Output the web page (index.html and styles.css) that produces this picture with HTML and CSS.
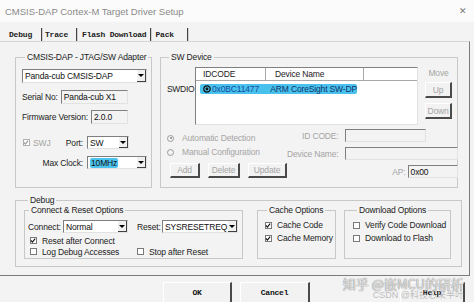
FILE: index.html
```html
<!DOCTYPE html>
<html lang="en">
<head>
    <meta charset="UTF-8">
    <title>CMSIS-DAP Cortex-M Target Driver Setup</title>
    <link rel="stylesheet" href="styles.css">
</head>
<body>
    <div class="window">
        <div class="titlebar">
            <span class="title">CMSIS-DAP Cortex-M Target Driver Setup</span>
            <span class="close">&#x2715;</span>
        </div>

        <div class="tabs">
            <span class="tab">Debug</span>
            <span class="tab">Trace</span>
            <span class="tab">Flash Download</span>
            <span class="tab">Pack</span>
        </div>

        <div class="panel">
            <div class="top-row">
                <fieldset class="group adapter">
                    <legend>CMSIS-DAP - JTAG/SW Adapter</legend>
                    <div class="select adapter-select">
                        <span class="val">Panda-cub CMSIS-DAP</span><span class="arrow"></span>
                    </div>
                    <div class="field-row serial-row">
                        <span>Serial No:</span>
                        <div class="input ro serial-input">Panda-cub X1</div>
                    </div>
                    <div class="field-row fw-row">
                        <span>Firmware Version:</span>
                        <div class="input ro fw-input">2.0.0</div>
                    </div>
                    <div class="port-grid">
                        <div class="swj">
                            <span class="check off-state">
                                <svg width="7" height="7" viewBox="0 0 7 7"><path d="M1 3.4 L2.8 5.3 L6 1.3" fill="none" stroke="#9a9a9a" stroke-width="1.3"/></svg>
                            </span>
                            <span class="dim swj-text">SWJ</span>
                            <span class="port-lbl">Port:</span>
                        </div>
                        <div class="select sw-select"><span class="val">SW</span><span class="arrow"></span></div>
                        <div class="clock-lbl">Max Clock:</div>
                        <div class="select clock-select"><span class="val"><span class="hl">10MHz</span></span><span class="arrow"></span></div>
                    </div>
                </fieldset>

                <fieldset class="group swdev">
                    <legend>SW Device</legend>
                    <div class="dev-top">
                        <div class="swdio">SWDIO</div>
                        <div class="list">
                            <div class="list-head">
                                <span class="col-id">IDCODE</span>
                                <span class="col-name">Device Name</span>
                                <span class="col-rest"></span>
                            </div>
                            <div class="list-row">
                                <span class="hl-row">
                                    <svg class="dot-icon" width="8" height="8" viewBox="0 0 8 8"><circle cx="4" cy="4" r="3.2" fill="none" stroke="#111" stroke-width="1.2"/><circle cx="4" cy="4" r="1.4" fill="#111"/></svg>
                                    <span class="id-text">0x0BC11477</span>
                                    <span class="name-text">ARM CoreSight SW-DP</span>
                                </span>
                            </div>
                        </div>
                        <div class="move">
                            <div class="dim move-lbl">Move</div>
                            <div class="btn dim up-btn">Up</div>
                            <div class="btn dim down-btn">Down</div>
                        </div>
                    </div>
                    <div class="dev-bottom">
                        <div class="dev-left">
                            <div class="radio-row dim"><span class="radio on"></span>Automatic Detection</div>
                            <div class="radio-row dim second"><span class="radio"></span>Manual Configuration</div>
                            <div class="dev-buttons">
                                <div class="btn dim add-btn">Add</div>
                                <div class="btn dim del-btn">Delete</div>
                                <div class="btn dim upd-btn">Update</div>
                            </div>
                        </div>
                        <div class="dev-right">
                            <div class="dev-field id-row"><span class="dim">ID CODE:</span><div class="input ro id-input"></div></div>
                            <div class="dev-field name-row"><span class="dim">Device Name:</span><div class="input ro name-input"></div></div>
                            <div class="dev-field ap-row"><span class="dim">AP:</span><div class="input ro ap-input">0x00</div></div>
                        </div>
                    </div>
                </fieldset>
            </div>

            <fieldset class="group debug">
                <legend>Debug</legend>
                <div class="debug-row">
                    <fieldset class="group conn">
                        <legend>Connect &amp; Reset Options</legend>
                        <div class="conn-row">
                            <span class="conn-lbl">Connect:</span>
                            <div class="select normal-select"><span class="val">Normal</span><span class="arrow"></span></div>
                            <span class="reset-lbl">Reset:</span>
                            <div class="select reset-select"><span class="val">SYSRESETREQ</span><span class="arrow"></span></div>
                        </div>
                        <div class="check-row first">
                            <span class="check"><svg width="7" height="7" viewBox="0 0 7 7"><path d="M1 3.4 L2.8 5.3 L6 1.3" fill="none" stroke="#111" stroke-width="1.3"/></svg></span>
                            Reset after Connect
                        </div>
                        <div class="check-row">
                            <span class="check-item log-item"><span class="check"></span>Log Debug Accesses</span>
                            <span class="check-item"><span class="check"></span>Stop after Reset</span>
                        </div>
                    </fieldset>

                    <fieldset class="group cache">
                        <legend>Cache Options</legend>
                        <div class="check-row first">
                            <span class="check"><svg width="7" height="7" viewBox="0 0 7 7"><path d="M1 3.4 L2.8 5.3 L6 1.3" fill="none" stroke="#111" stroke-width="1.3"/></svg></span>
                            Cache Code
                        </div>
                        <div class="check-row">
                            <span class="check"><svg width="7" height="7" viewBox="0 0 7 7"><path d="M1 3.4 L2.8 5.3 L6 1.3" fill="none" stroke="#111" stroke-width="1.3"/></svg></span>
                            Cache Memory
                        </div>
                    </fieldset>

                    <fieldset class="group dl">
                        <legend>Download Options</legend>
                        <div class="check-row first"><span class="check"></span>Verify Code Download</div>
                        <div class="check-row"><span class="check"></span>Download to Flash</div>
                    </fieldset>
                </div>
            </fieldset>
        </div>

        <div class="footer">
            <div class="btn big ok-btn">OK</div>
            <div class="btn big cancel-btn">Cancel</div>
            <div class="btn big help-btn">Help</div>
            <div class="watermark">
                <div class="wm-main">知乎 @嵌MCU的研析</div>
                <div class="wm-sub">CSDN @科技芯来半叶</div>
            </div>
        </div>
    </div>
</body>
</html>
```

FILE: styles.css
```css
* {
    box-sizing: border-box;
}

body {
    margin: 0;
    width: 474px;
    height: 302px;
    overflow: hidden;
    background-color: #f3f3f3;
    font-family: "Liberation Sans", Arial, sans-serif;
    font-size: 8.5px;
    letter-spacing: -0.15px;
    color: #222;
}

.window {
    position: relative;
    height: 302px;
}

.titlebar {
    height: 22px;
    display: flex;
    align-items: center;
    justify-content: space-between;
    padding: 0 7px 0 5px;
    background-color: #fbfbfb;
    color: #8a8a8a;
    font-size: 9.5px;
    letter-spacing: 0;
}

.close {
    font-size: 9px;
    color: #777;
}

/* tabs */
.tabs {
    height: 19px;
    display: flex;
    align-items: flex-end;
    font-family: "Liberation Mono", monospace;
    font-weight: bold;
    font-size: 8px;
    letter-spacing: -0.2px;
    color: #222;
}

.tab {
    height: 13px;
    line-height: 13px;
    border-right: 1px solid #444;
    box-shadow: 1px 0 0 #d0d0d0;
}

.tab:nth-child(1) { padding: 0 9px 0 9px; }
.tab:nth-child(2) { padding: 0 8px 0 3px; }
.tab:nth-child(3) { padding: 0 4px 0 5px; }
.tab:nth-child(4) { padding: 0 13px 0 4px; }

.panel {
    width: 470px;
    height: 235px;
    border-top: 1px solid #d6d6d6;
    border-right: 1px solid #7c7c7c;
    border-bottom: 1px solid #7c7c7c;
    padding: 10px 0 0 15px;
}

/* group boxes */
.group {
    margin: 0;
    min-width: 0;
    padding: 0;
    border: 1px solid #c8c8c8;
}

.group legend {
    padding: 0 2px;
    margin-left: 3px;
    height: 10px;
    line-height: 10px;
    white-space: nowrap;
}

.top-row {
    display: flex;
    gap: 8px;
    height: 136px;
}

.adapter {
    width: 137px;
    height: 136px;
    padding: 0 4px 0 6px;
}

.swdev {
    width: 298px;
    height: 136px;
    padding: 0 5px 0 6px;
}

.swdev legend {
    margin-left: 2px;
}

/* fields */
.select,
.input {
    display: flex;
    align-items: center;
    height: 14px;
    padding-left: 2px;
    border: 1px solid;
    border-color: #7f7f7f #e2e2e2 #e2e2e2 #7f7f7f;
    background-color: #fff;
    color: #111;
    white-space: nowrap;
}

.input.ro {
    background-color: #f3f3f3;
}

.select .val {
    flex: 1;
}

.arrow {
    width: 9px;
    height: 100%;
    background-color: #f0f0f0;
    border-right: 1px solid #404040;
    border-bottom: 1px solid #404040;
    display: flex;
    align-items: center;
    justify-content: center;
}

.arrow::after {
    content: "";
    border-left: 3px solid transparent;
    border-right: 3px solid transparent;
    border-top: 3px solid #000;
}

.adapter-select {
    margin-top: 7px;
}

.field-row {
    display: flex;
    justify-content: flex-end;
    align-items: center;
    gap: 3px;
    height: 14px;
    padding-right: 19px;
    white-space: nowrap;
}

.serial-row {
    margin-top: 7px;
}

.fw-row {
    margin-top: 6px;
}

.serial-input {
    width: 68px;
}

.fw-input {
    width: 42px;
}

.port-grid {
    display: grid;
    grid-template-columns: 63px auto;
    column-gap: 2px;
    row-gap: 7px;
    margin-top: 12px;
    align-items: center;
    justify-items: start;
}

.port-grid .select {
    height: 13px;
}

.swj {
    display: flex;
    align-items: center;
    width: 100%;
}

.swj .check {
    margin-left: 1px;
}

.swj-text {
    margin-left: 3px;
}

.port-lbl {
    margin-left: auto;
    padding-right: 2px;
}

.clock-lbl {
    width: 100%;
    text-align: right;
    padding-right: 2px;
}

.sw-select {
    width: 42px;
}

.clock-select {
    width: 60px;
}

.hl {
    background-color: #4cc3ee;
    border-radius: 2px;
    padding: 0 1px;
}

.dim {
    color: #a4a4a4;
}

/* check boxes and radios */
.check {
    display: inline-flex;
    width: 7px;
    height: 7px;
    border: 1px solid #7a7a7a;
    background-color: #fff;
    flex-shrink: 0;
}

.check svg {
    margin: -1px 0 0 -1px;
}

.check.off-state {
    border-color: #b0b0b0;
}

.radio {
    display: inline-block;
    width: 7px;
    height: 7px;
    border-radius: 50%;
    border: 1px solid #9a9a9a;
    margin-right: 8px;
    position: relative;
}

.radio.on::after {
    content: "";
    position: absolute;
    left: 1.5px;
    top: 1.5px;
    width: 2px;
    height: 2px;
    border-radius: 50%;
    background-color: #8a8a8a;
}

/* SW device */
.dev-top {
    display: flex;
    margin-top: 5px;
    height: 58px;
}

.swdio {
    width: 28px;
    padding-top: 17px;
    line-height: 10px;
    letter-spacing: -0.3px;
}

.list {
    width: 223px;
    height: 58px;
    background-color: #fff;
    border: 1px solid;
    border-color: #808080 #e2e2e2 #e2e2e2 #808080;
}

.list-head {
    display: flex;
    height: 13px;
    line-height: 12px;
    border-bottom: 1px solid #a8a8a8;
}

.col-id {
    width: 69px;
    padding-left: 7px;
}

.col-name {
    width: 98px;
    padding-left: 9px;
    border-left: 1px solid #a8a8a8;
}

.col-rest {
    flex: 1;
    border-left: 1px solid #a8a8a8;
}

.list-row {
    margin-top: 3px;
}

.hl-row {
    display: flex;
    align-items: center;
    width: 157px;
    height: 10px;
    margin-left: 4px;
    padding-left: 3px;
    background-color: #48c2ec;
    border-radius: 2px;
    color: #15306a;
}

.dot-icon {
    flex-shrink: 0;
}

.id-text {
    width: 53px;
    padding-left: 1px;
    color: #1b4aa0;
}

.name-text {
    padding-left: 8px;
    white-space: nowrap;
}

.move {
    margin-left: 7px;
    width: 27px;
}

.move-lbl {
    margin-top: 1px;
    line-height: 10px;
    text-align: center;
}

.btn {
    display: flex;
    align-items: center;
    justify-content: center;
    background-color: #f2f2f2;
    border-top: 1px solid #fff;
    border-left: 1px solid #fff;
    border-right: 2px solid #4a4a4a;
    border-bottom: 2px solid #4a4a4a;
}

.up-btn {
    margin-top: 4px;
    height: 16px;
}

.down-btn {
    margin-top: 5px;
    height: 16px;
}

.dev-bottom {
    display: flex;
    justify-content: space-between;
    margin-top: 4px;
}

.dev-left {
    padding-top: 4px;
}

.radio-row {
    display: flex;
    align-items: center;
    height: 10px;
    white-space: nowrap;
}

.radio-row.second {
    margin-top: 4px;
}

.dev-buttons {
    display: flex;
    gap: 8px;
    margin: 6px 0 0 3px;
}

.dev-buttons .btn {
    height: 15px;
}

.add-btn { width: 30px; }
.del-btn { width: 32px; }
.upd-btn { width: 39px; }

.dev-right {
    display: flex;
    flex-direction: column;
    align-items: flex-end;
    gap: 5px;
}

.dev-field {
    display: flex;
    align-items: center;
    gap: 6px;
    white-space: nowrap;
}

.dev-field .input {
    height: 13px;
}

.id-row {
    margin-right: 34px;
}

.name-row,
.ap-row {
    margin-right: 2px;
}

.ap-row {
    gap: 2px;
}

.id-input { width: 81px; }
.name-input { width: 113px; }
.ap-input { width: 50px; }

/* debug */
.debug {
    margin-top: 7px;
    width: 447px;
    height: 72px;
    padding: 0 0 0 8px;
}

.debug legend {
    margin-left: 4px;
}

.debug-row {
    display: flex;
}

.conn {
    width: 219px;
    height: 54px;
    padding-left: 3px;
}

.conn legend {
    margin-left: 1px;
}

.cache {
    margin-left: 14px;
    width: 79px;
    height: 54px;
    padding-left: 7px;
}

.cache legend {
    margin-left: 2px;
}

.dl {
    margin-left: 8px;
    width: 107px;
    height: 54px;
    padding-left: 8px;
}

.dl legend {
    margin-left: 4px;
}

.conn-row {
    display: flex;
    align-items: center;
    margin-top: 5px;
    height: 13px;
}

.conn-row .select {
    height: 13px;
}

.conn-lbl {
    width: 35px;
}

.normal-select {
    width: 65px;
}

.reset-lbl {
    margin-left: 9px;
    width: 25px;
}

.reset-select {
    width: 76px;
}

.check-row {
    display: flex;
    align-items: center;
    gap: 5px;
    height: 11px;
    white-space: nowrap;
}

.conn .check-row {
    padding-left: 2px;
}

.conn .check-row.first {
    margin-top: 2px;
}

.cache .check-row,
.dl .check-row {
    height: 10px;
    margin-top: 3px;
}

.cache .check-row.first,
.dl .check-row.first {
    margin-top: 5px;
}

.check-item {
    display: flex;
    align-items: center;
    gap: 5px;
}

.log-item {
    width: 102px;
}

/* footer */
.footer {
    display: flex;
    gap: 8px;
    padding-left: 163px;
    height: 26px;
    overflow: hidden;
}

.btn.big {
    margin-top: 6px;
    height: 24px;
    font-family: "Liberation Mono", monospace;
    font-weight: bold;
    font-size: 8px;
    letter-spacing: -0.2px;
    color: #111;
    padding-bottom: 2px;
}

.ok-btn { width: 69px; }
.cancel-btn { width: 70px; }
.help-btn {
    width: 65px;
    margin-left: 82px;
}

.watermark {
    position: absolute;
    right: 10px;
    bottom: 2px;
    text-align: right;
    letter-spacing: 0;
    pointer-events: none;
}

.wm-main {
    font-family: "Noto Sans CJK SC", sans-serif;
    font-size: 13px;
    line-height: 14px;
    color: rgba(255, 255, 255, 0.7);
    text-shadow: 0 0 1px #8a8a8a, 0 0 1px #8a8a8a;
}

.wm-sub {
    font-family: "Liberation Sans", "Noto Sans CJK SC", sans-serif;
    font-size: 9px;
    line-height: 9px;
    color: rgba(150, 150, 150, 0.6);
}
```
